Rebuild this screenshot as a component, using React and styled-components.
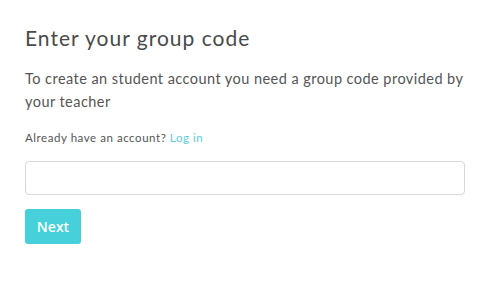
import React from 'react'
import styled, { createGlobalStyle } from 'styled-components'

const GlobalStyle = createGlobalStyle`
  body {
    margin: 0;
    background: #fff;
    font-family: 'Lato', 'Open Sans', sans-serif;
    color: #555;
  }
`

const Page = styled.div`
  padding: 24px 25px 0 25px;
  width: 440px;
`

const Title = styled.h1`
  margin: 0 0 15px;
  font-size: 21px;
  font-weight: 400;
  line-height: 28px;
  color: #4a4a4a;
  letter-spacing: 1px;
`

const Lead = styled.p`
  margin: 0 0 17px;
  font-size: 14.5px;
  line-height: 23px;
  color: #555;
  letter-spacing: 0.45px;
`

const Hint = styled.p`
  margin: 0 0 15px;
  font-size: 11.5px;
  line-height: 16px;
  color: #555;
  letter-spacing: 0.55px;

  a {
    color: #5ccbdb;
    text-decoration: none;
  }
`

const Input = styled.input`
  display: block;
  box-sizing: border-box;
  width: 440px;
  height: 34px;
  border: 1px solid #d8d8d8;
  border-radius: 4px;
  padding: 0 10px;
  font-size: 14px;
  outline: none;
  margin-bottom: 14px;
`

const Button = styled.button`
  box-sizing: border-box;
  height: 35px;
  width: 56px;
  border: none;
  border-radius: 3px;
  background: #45d0da;
  color: #fff;
  font-family: 'Open Sans', sans-serif;
  font-weight: 600;
  font-size: 14px;
  cursor: pointer;
`

export default function App() {
  return (
    <>
      <GlobalStyle />
      <Page>
        <Title>Enter your group code</Title>
        <Lead>To create an student account you need a group code provided by your teacher</Lead>
        <Hint>Already have an account? <a href="#">Log in</a></Hint>
        <Input type="text" />
        <Button>Next</Button>
      </Page>
    </>
  )
}
